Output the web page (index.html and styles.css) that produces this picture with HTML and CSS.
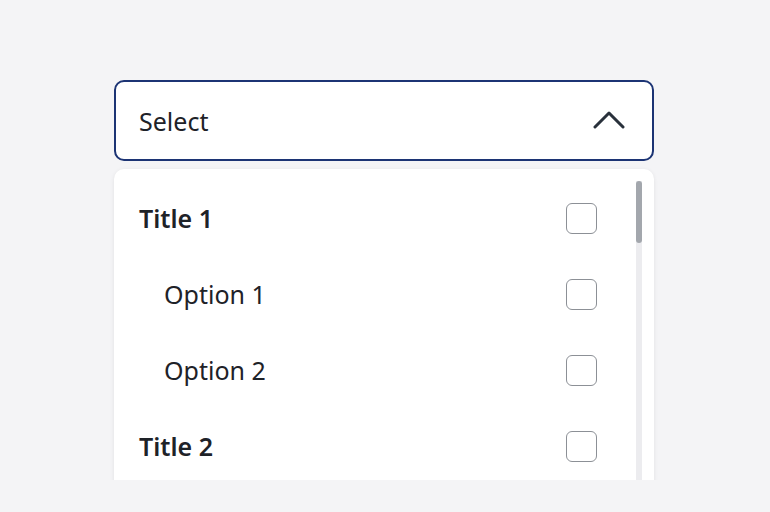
FILE: index.html
```html
<!DOCTYPE html>
<html lang="en">
<head>
  <meta charset="UTF-8">
  <title>Select</title>
  <link rel="stylesheet" href="styles.css">
</head>
<body>
<div class="frame">
  <div class="dropdown">
    <div class="select-box">
      <span class="select-label">Select</span>
      <svg class="chevron" width="32" height="20" viewBox="0 0 32 20">
        <path d="M2 17 L16 3 L30 17" fill="none" stroke="#29313b" stroke-width="3" stroke-linecap="round" stroke-linejoin="round"/>
      </svg>
    </div>
    <div class="panel">
      <div class="row title">
        <span>Title 1</span>
        <span class="checkbox"></span>
      </div>
      <div class="row option">
        <span>Option 1</span>
        <span class="checkbox"></span>
      </div>
      <div class="row option">
        <span>Option 2</span>
        <span class="checkbox"></span>
      </div>
      <div class="row title">
        <span>Title 2</span>
        <span class="checkbox"></span>
      </div>
      <div class="scrollbar"><div class="thumb"></div></div>
    </div>
  </div>
</div>
</body>
</html>
```

FILE: styles.css
```css
body {
  margin: 0;
  background-color: #F4F4F6;
  font-family: 'Noto Sans', 'Open Sans', sans-serif;
  color: #1E2228;
}

.frame {
  height: 480px;
  overflow: hidden;
  padding-top: 80px;
  box-sizing: border-box;
}

.dropdown {
  width: 540px;
  margin-left: 114px;
}

.select-box {
  height: 81px;
  box-sizing: border-box;
  border: 2px solid #1C3474;
  border-radius: 10px;
  background-color: #FFFFFF;
  display: flex;
  align-items: center;
  justify-content: space-between;
  padding: 0 27px 0 23px;
}

.select-label {
  font-size: 25px;
  color: #1E2228;
}

.chevron {
  display: block;
  margin-top: -2px;
}

.panel {
  position: relative;
  margin-top: 8px;
  background-color: #FFFFFF;
  border-radius: 10px;
  box-shadow: 0 1px 4px rgba(0, 0, 0, 0.08);
  padding-top: 11px;
  height: 400px;
  box-sizing: border-box;
}

.row {
  height: 76px;
  display: flex;
  align-items: center;
  justify-content: space-between;
  padding: 0 57px 0 25px;
  font-size: 25px;
}

.row.title {
  font-weight: 600;
}

.row.option {
  padding-left: 50px;
}

.checkbox {
  width: 31px;
  height: 31px;
  box-sizing: border-box;
  border: 1.8px solid #8C9096;
  border-radius: 6px;
}

.scrollbar {
  position: absolute;
  top: 12px;
  bottom: 0;
  right: 12px;
  width: 6px;
  background-color: #ECECEF;
}

.thumb {
  height: 62px;
  border-radius: 3px;
  background-color: #A3A7AD;
}
```
